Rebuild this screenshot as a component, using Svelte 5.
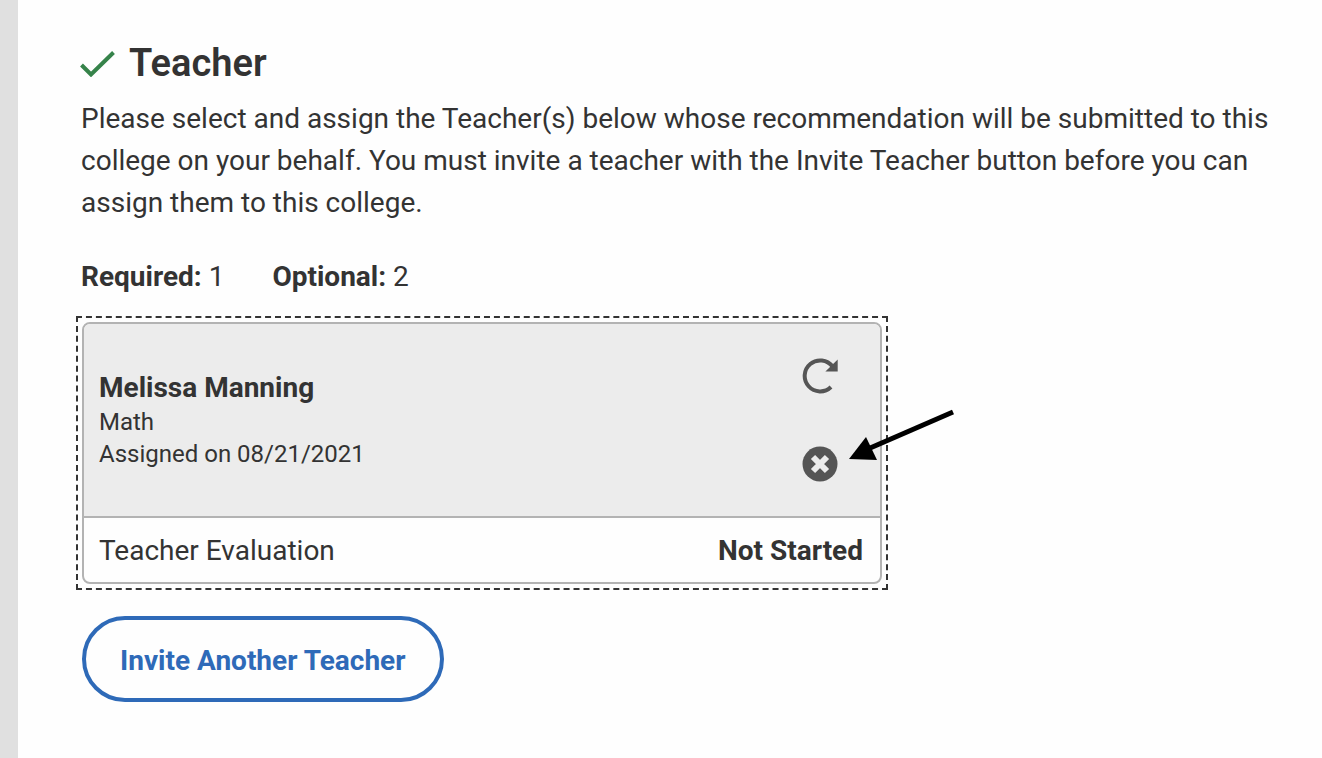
<script>
  let { name = "Melissa Manning", subject = "Math", assigned = "08/21/2021" } = $props();

  const counts = [
    { label: "Required:", value: 1 },
    { label: "Optional:", value: 2 },
  ];
</script>

<main class="panel">
  <h2 class="title">
    <svg class="title-check" viewBox="0 0 36 28" aria-hidden="true">
      <path d="M1.5 16 L11 25.5 L33.5 3.5" />
    </svg>
    Teacher
  </h2>

  <p class="intro">
    Please select and assign the Teacher(s) below whose recommendation will be submitted to this
    college on your behalf. You must invite a teacher with the Invite Teacher button before you can
    assign them to this college.
  </p>

  <div class="counts">
    {#each counts as count}
      <span><strong>{count.label}</strong> {count.value}</span>
    {/each}
  </div>

  <div class="focus-ring">
    <section class="card">
      <div class="card-head">
        <div class="person">
          <h3>{name}</h3>
          <p>{subject}</p>
          <p>Assigned on {assigned}</p>
        </div>
        <div class="actions">
          <button type="button" class="icon-btn" aria-label="Resend invitation">
            <svg viewBox="0 0 36 36" aria-hidden="true">
              <path class="arc" d="M29 29 A15.5 15.5 0 1 1 30.5 8.5" />
              <path class="fill" d="M35.7 1.6 V13.6 H23.4 Z" />
            </svg>
          </button>
          <button type="button" class="icon-btn" aria-label="Remove teacher">
            <svg viewBox="0 0 36 36" aria-hidden="true">
              <circle class="fill" cx="18" cy="18" r="17.5" />
              <path class="cross" d="M11 11 L25 25 M25 11 L11 25" />
            </svg>
          </button>
        </div>
      </div>
      <div class="card-row">
        <span>Teacher Evaluation</span>
        <strong>Not Started</strong>
      </div>
    </section>

    <svg class="pointer" viewBox="0 0 108 56" aria-hidden="true">
      <path class="pointer-line" d="M104 7 L20 43.5" />
      <path d="M0 54 L17 32 L28 55 Z" />
    </svg>
  </div>

  <button type="button" class="invite">Invite Another Teacher</button>
</main>

<style>
  :global(body) {
    background: #fefefe;
  }

  .panel {
    box-sizing: border-box;
    min-height: 100vh;
    padding: 36px 48px 56px 63px;
    border-left: 18px solid #e0e0e0;
    color: #333;
    font-family: Roboto, "Liberation Sans", sans-serif;
    font-size: 28px;
    line-height: 42px;
  }

  h2,
  h3,
  p {
    margin: 0;
  }

  .title {
    display: flex;
    align-items: center;
    gap: 13px;
    margin-bottom: 8px;
    font-size: 38px;
    font-weight: 600;
    line-height: 54px;
  }

  .title-check {
    width: 36px;
    height: 28px;
    margin-left: -1px;
    fill: none;
    stroke: #36834a;
    stroke-width: 4;
  }

  .counts {
    display: flex;
    gap: 48px;
    margin: 32px 0 24px;
  }

  strong {
    font-weight: 700;
  }

  .focus-ring {
    position: relative;
    max-width: 800px;
    margin-left: 1px;
    outline: 2px dashed #333;
    outline-offset: 4px;
  }

  .card {
    overflow: hidden;
    border: 2px solid #b3b3b3;
    border-radius: 8px;
  }

  .card-head {
    display: flex;
    align-items: center;
    justify-content: space-between;
    padding: 8px 16px 8px 15px;
    background: #ececec;
    border-bottom: 2px solid #b3b3b3;
  }

  .person {
    font-size: 24px;
    line-height: 32px;
  }

  .person h3 {
    font-size: 28px;
    font-weight: 700;
    line-height: 36px;
  }

  .actions {
    display: flex;
    flex-direction: column;
  }

  .icon-btn {
    display: flex;
    align-items: center;
    justify-content: center;
    width: 88px;
    height: 88px;
    padding: 0;
    border: none;
    background: transparent;
    cursor: pointer;
  }

  .icon-btn svg {
    width: 36px;
    height: 36px;
  }

  .fill {
    fill: #555;
  }

  .arc {
    fill: none;
    stroke: #555;
    stroke-width: 4;
  }

  .cross {
    fill: none;
    stroke: #ececec;
    stroke-width: 6;
  }

  .card-row {
    display: flex;
    align-items: center;
    justify-content: space-between;
    padding: 12px 17px 10px 15px;
  }

  /* arrow lying over the card edge, aimed at the remove button */
  .pointer {
    position: absolute;
    top: 83px;
    right: -75px;
    width: 108px;
    height: 56px;
    fill: #000;
  }

  .pointer-line {
    fill: none;
    stroke: #000;
    stroke-width: 5;
  }

  .invite {
    margin: 32px 0 0 1px;
    padding: 20px 34px 16px;
    border: 4px solid #2e6ab8;
    border-radius: 43px;
    background: transparent;
    color: #2e6ab8;
    font: inherit;
    font-weight: 700;
    cursor: pointer;
  }
</style>
